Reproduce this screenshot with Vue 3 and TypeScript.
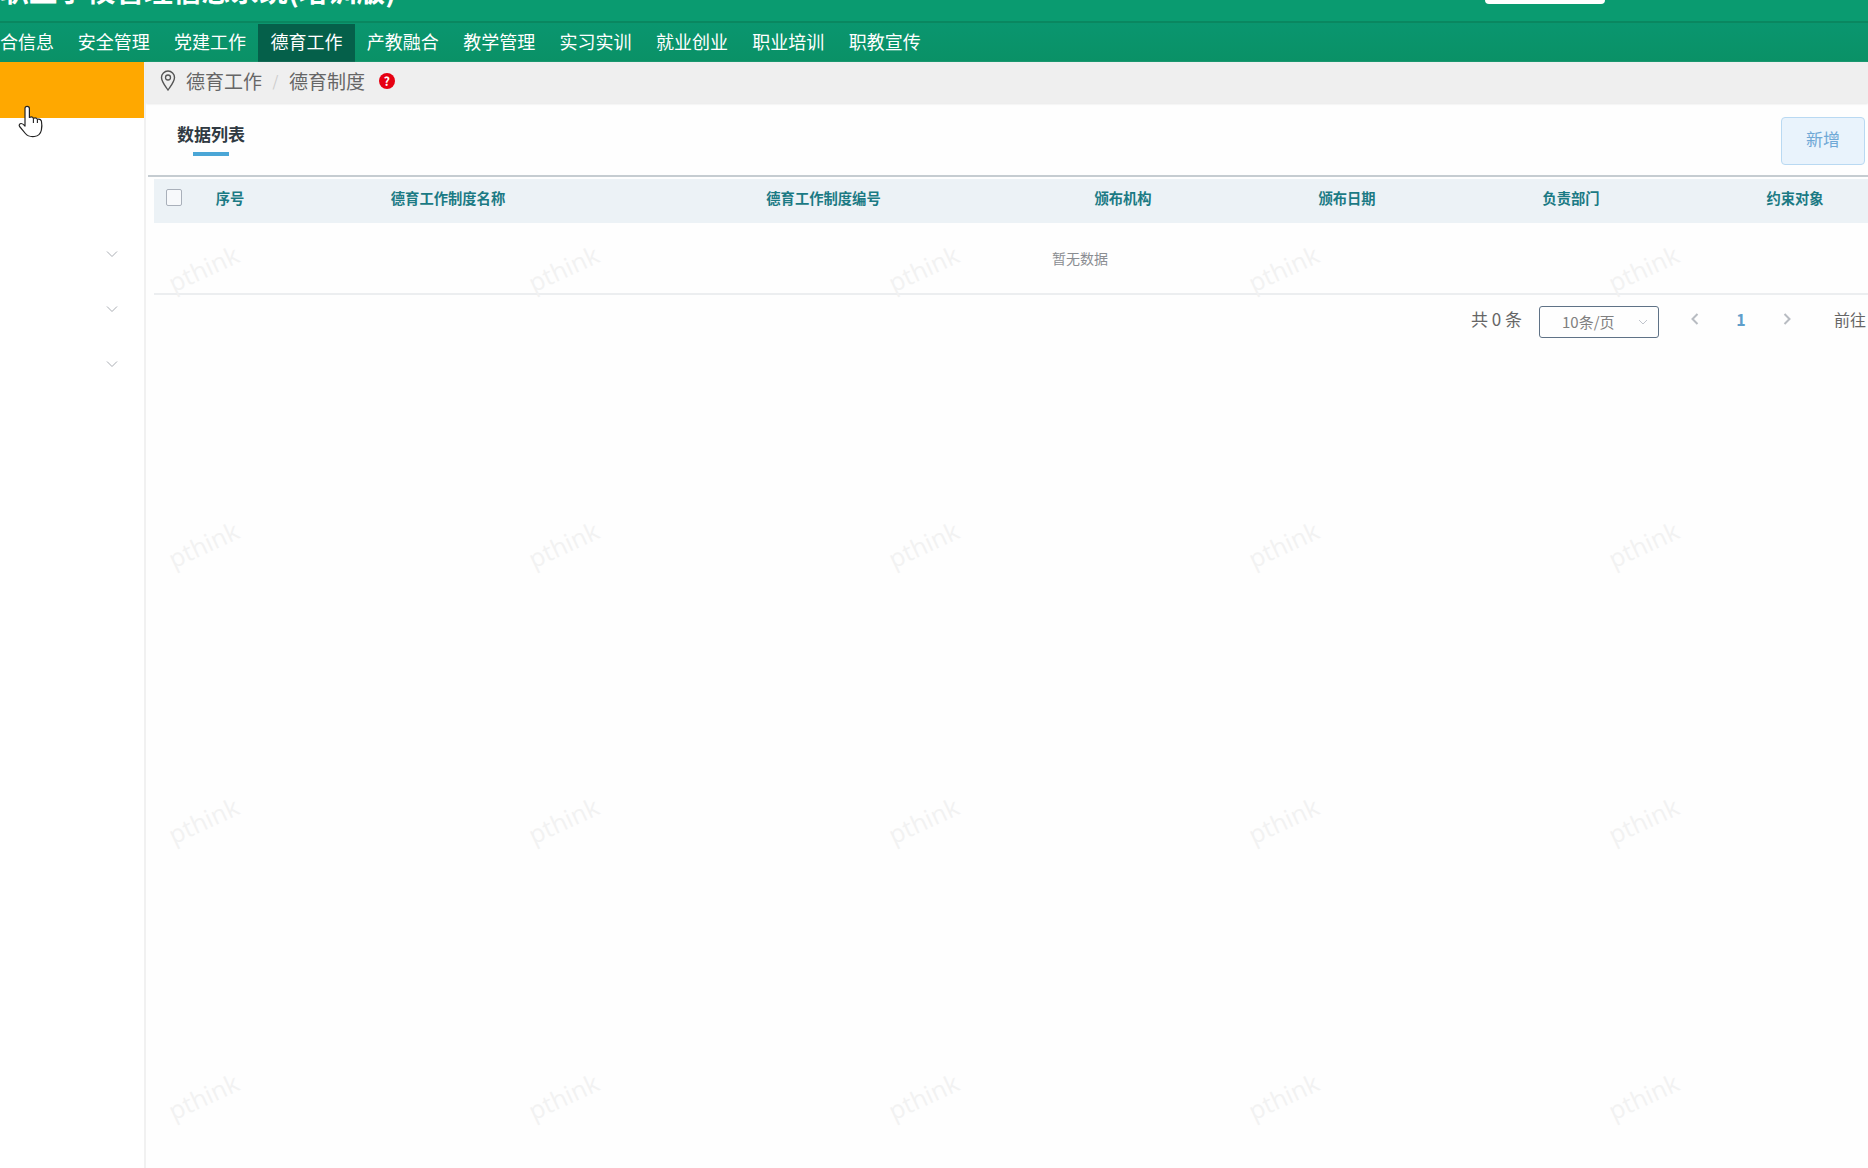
<script setup lang="ts">
// 德育制度 list page: top nav, side menu, empty table and pager

interface Column {
  key: string
  label: string
}

const navItems = ['合信息', '安全管理', '党建工作', '德育工作', '产教融合', '教学管理', '实习实训', '就业创业', '职业培训', '职教宣传']
const activeNav = '德育工作'

const columns: Column[] = [
  { key: 'index', label: '序号' },
  { key: 'name', label: '德育工作制度名称' },
  { key: 'code', label: '德育工作制度编号' },
  { key: 'org', label: '颁布机构' },
  { key: 'date', label: '颁布日期' },
  { key: 'dept', label: '负责部门' },
  { key: 'target', label: '约束对象' },
]

// side menu groups whose labels are blank in this state
const menuGroups = [1, 2, 3]
const watermarks = Array.from({ length: 20 }, (_, i) => i)
</script>

<template>
  <div class="page">
    <header class="topbar">
      <h1 class="system-title">职业学校管理信息系统(培训版)</h1>
      <div class="user-pill"></div>
    </header>

    <nav class="navbar">
      <a
        v-for="item in navItems"
        :key="item"
        class="nav-item"
        :class="{ active: item === activeNav, clipped: item === '合信息' }"
      >{{ item }}</a>
    </nav>

    <div class="body">
      <aside class="sidebar">
        <div class="side-brand"></div>
        <ul class="side-menu">
          <li v-for="group in menuGroups" :key="group" class="side-item">
            <svg class="side-arrow" viewBox="0 0 12 8" width="12" height="8">
              <path d="M1 1.5l5 5 5-5" fill="none" stroke="#a9adb3" stroke-width="1" />
            </svg>
          </li>
        </ul>
      </aside>

      <main class="main">
        <div class="breadcrumb">
          <svg class="pin" viewBox="0 0 16 21" width="16" height="21">
            <path
              d="M8 1a6.5 6.5 0 0 0-6.5 6.5C1.500 12 5.800 16.500 8 20c2.200-3.500 6.500-8 6.500-12.500A6.500 6.500 0 0 0 8 1z"
              fill="none"
              stroke="#555"
              stroke-width="1.400"
            />
            <circle cx="8" cy="7.500" r="2.500" fill="none" stroke="#555" stroke-width="1.300" />
          </svg>
          <span>德育工作</span>
          <span class="crumb-sep">/</span>
          <span>德育制度</span>
          <span class="help">?</span>
        </div>

        <section class="panel">
          <div class="panel-head">
            <div class="panel-tab">数据列表</div>
            <button class="add-btn">新增</button>
          </div>

          <div class="table-wrap">
            <div class="table">
              <div class="thead">
                <div class="cell check-cell"><span class="checkbox"></span></div>
                <div v-for="col in columns" :key="col.key" class="cell" :class="`col-${col.key}`">{{ col.label }}</div>
              </div>
              <div class="empty">暂无数据</div>
            </div>
          </div>

          <div class="pager">
            <span class="pager-total">共 0 条</span>
            <div class="pager-size">
              <span>10条/页</span>
              <svg viewBox="0 0 10 6" width="10" height="6">
                <path d="M1 1l4 4 4-4" fill="none" stroke="#c0c4cc" stroke-width="1" />
              </svg>
            </div>
            <svg class="pager-arrow prev" viewBox="0 0 8 12" width="8" height="12">
              <path d="M6.500 1L1.500 6l5 5" fill="none" stroke="#b8bcc2" stroke-width="2" />
            </svg>
            <span class="pager-num">1</span>
            <svg class="pager-arrow next" viewBox="0 0 8 12" width="8" height="12">
              <path d="M1.500 1l5 5-5 5" fill="none" stroke="#b8bcc2" stroke-width="2" />
            </svg>
            <span class="pager-goto">前往</span>
          </div>
        </section>
      </main>
    </div>

    <div class="watermarks">
      <span v-for="mark in watermarks" :key="mark" class="watermark">pthink</span>
    </div>

    <svg class="hand-cursor" viewBox="0 0 26 34" width="26" height="34">
      <path
        d="M7 21V3.500a2.200 2.200 0 0 1 4.400 0v9c1.600-.8 3.400-.4 4 .8 1.600-.7 3.300-.3 4 1 1.800-.6 3.400.2 4 1.700.6 3 .6 6 0 9-.6 3-3 6-7 6.500-4 .4-7-.5-9-3L1.600 21.500c-1-1.200 0-3 1.600-3 1.400 0 2.600 1.200 3.800 2.500z"
        fill="#fff"
        stroke="#222"
        stroke-width="1.200"
        stroke-linejoin="round"
      />
      <path d="M15.400 13.300V18M19.400 14.300V18" fill="none" stroke="#222" stroke-width="1.100" />
    </svg>
  </div>
</template>

<style>
html,
body {
  margin: 0;
  overflow: hidden;
  background: #fff;
}
</style>

<style scoped>
.page {
  position: relative;
  display: flex;
  flex-direction: column;
  width: 1868px;
  height: 1168px;
  overflow: hidden;
  background: #fefefe;
  font-family: "Noto Sans CJK SC", "Liberation Sans", sans-serif;
}

.topbar {
  display: flex;
  justify-content: space-between;
  height: 21px;
  overflow: hidden;
  flex-shrink: 0;
  background: #0a9b70;
  border-bottom: 2px solid #0a8760;
}

.system-title {
  margin: -28px 0 0;
  font-size: 28.800px;
  line-height: 36px;
  font-weight: 700;
  color: #fff;
  white-space: nowrap;
}

.user-pill {
  width: 120px;
  height: 4px;
  margin-right: 263px;
  background: #fff;
  border-radius: 0 0 4px 4px;
}

.navbar {
  display: flex;
  height: 39px;
  flex-shrink: 0;
  background: linear-gradient(#0a966f, #0a9166);
}

.nav-item {
  padding: 0 12.200px;
  font-size: 18px;
  line-height: 37px;
  color: #fff;
  white-space: nowrap;
}

.nav-item.clipped {
  width: 54px;
  padding: 0 11.500px 0 0;
}

.nav-item.active {
  margin: 1px -0.500px 0;
  padding: 0 12.700px;
  line-height: 35px;
  background: #05604a;
}

.body {
  display: flex;
  flex: 1;
  min-height: 0;
}

.sidebar {
  width: 144px;
  flex-shrink: 0;
  background: #fff;
  border-right: 2px solid #f1f1f1;
}

.side-brand {
  height: 56px;
  background: #ffa800;
}

.side-menu {
  margin: 108px 0 0;
  padding: 0;
  list-style: none;
}

.side-item {
  display: flex;
  align-items: center;
  justify-content: flex-end;
  height: 55px;
  padding-right: 26px;
}

.main {
  flex: 1;
  min-width: 0;
}

.breadcrumb {
  display: flex;
  align-items: center;
  height: 37px;
  padding: 0 0 4px 14px;
  font-size: 19px;
  color: #666;
  background: #efefef;
  box-shadow: 0 1px 2px #e6e6e6;
}

.pin {
  margin-right: 10px;
}

.crumb-sep {
  margin: 0 10.500px;
  font-size: 15px;
  color: #ccc;
}

.help {
  width: 16px;
  height: 16px;
  margin-left: 14px;
  border-radius: 50%;
  font-size: 12px;
  line-height: 16px;
  font-weight: 700;
  text-align: center;
  color: #fff;
  background: #e60012;
}

.panel-head {
  display: flex;
  align-items: flex-start;
  justify-content: space-between;
  height: 72px;
  padding: 14px 3px 0 31px;
  box-sizing: border-box;
}

.panel-tab {
  margin-top: 3px;
  font-size: 17px;
  line-height: 28px;
  font-weight: 700;
  color: #303a42;
}

.panel-tab::after {
  content: "";
  display: block;
  width: 36px;
  height: 4px;
  margin: 4px auto 0;
  background: #4aa6d6;
}

.add-btn {
  width: 84px;
  height: 48px;
  padding: 0 0 6px;
  font: inherit;
  font-size: 17px;
  color: #6fa8d6;
  background: #e9f3fc;
  border: 1px solid #b9d9f2;
  border-radius: 4px;
}

.table-wrap {
  margin-left: 2px;
  padding: 2px 0 0 6px;
  border-top: 2px solid #c5ccd1;
}

.table {
  width: 1852px;
}

.thead {
  display: grid;
  grid-template-columns: 46px 60px 376px 375px repeat(4, 224px);
  height: 37px;
  padding-bottom: 7px;
  align-items: center;
  font-size: 14.300px;
  font-weight: 700;
  color: #1b7a84;
  background: #ecf2f6;
}

.cell {
  text-align: center;
}

.check-cell {
  display: flex;
  justify-content: flex-start;
  padding-left: 12px;
}

.checkbox {
  width: 14px;
  height: 15px;
  border: 1px solid #a9b0ba;
  border-radius: 2px;
  background: #f7f9fb;
}

.empty {
  height: 70px;
  font-size: 14px;
  line-height: 70px;
  text-align: center;
  color: #8a8d92;
  border-bottom: 2px solid #eceef0;
}

.pager {
  display: flex;
  align-items: center;
  justify-content: flex-end;
  height: 47px;
  padding: 0 2px 6px 0;
  font-size: 16px;
  color: #666;
}

.pager-total {
  margin-right: 17px;
  font-size: 17px;
}

.pager-size {
  display: flex;
  align-items: center;
  justify-content: space-between;
  width: 120px;
  height: 32px;
  margin-top: 6px;
  padding: 0 10px 0 22px;
  box-sizing: border-box;
  font-size: 15px;
  color: #808080;
  border: 1px solid #5f7286;
  border-radius: 3px;
}

.pager-arrow.prev {
  margin-left: 32px;
}

.pager-num {
  width: 14px;
  margin: 0 35px;
  font-weight: 700;
  text-align: center;
  color: #5f9ecb;
}

.pager-arrow.next {
  margin-right: 43px;
}

/* watermark and pointer lie over the page */
.watermarks {
  position: absolute;
  top: 130px;
  left: 23px;
  display: grid;
  grid-template-columns: repeat(5, 360px);
  grid-auto-rows: 276px;
  pointer-events: none;
}

.watermark {
  align-self: center;
  justify-self: center;
  font-family: "Open Sans", sans-serif;
  font-size: 25px;
  color: #f2f2f2;
  transform: rotate(-25deg);
}

.hand-cursor {
  position: absolute;
  top: 105px;
  left: 18px;
}
</style>
